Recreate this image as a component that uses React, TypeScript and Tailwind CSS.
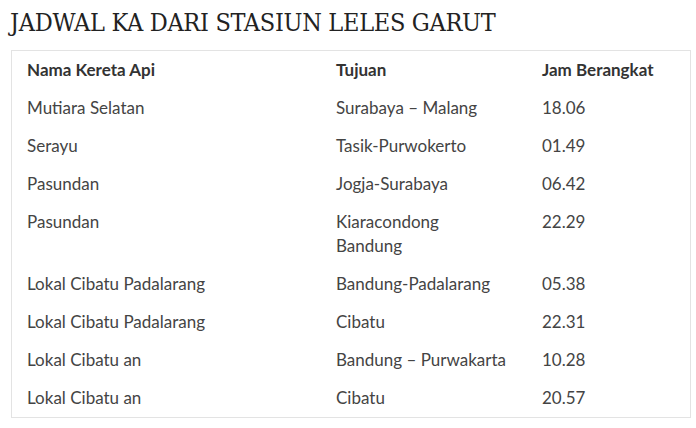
const rows: { name: string; tujuan: string[]; jam: string }[] = [
  { name: "Mutiara Selatan", tujuan: ["Surabaya – Malang"], jam: "18.06" },
  { name: "Serayu", tujuan: ["Tasik-Purwokerto"], jam: "01.49" },
  { name: "Pasundan", tujuan: ["Jogja-Surabaya"], jam: "06.42" },
  { name: "Pasundan", tujuan: ["Kiaracondong", "Bandung"], jam: "22.29" },
  { name: "Lokal Cibatu Padalarang", tujuan: ["Bandung-Padalarang"], jam: "05.38" },
  { name: "Lokal Cibatu Padalarang", tujuan: ["Cibatu"], jam: "22.31" },
  { name: "Lokal Cibatu an", tujuan: ["Bandung – Purwakarta"], jam: "10.28" },
  { name: "Lokal Cibatu an", tujuan: ["Cibatu"], jam: "20.57" },
]

export default function App() {
  return (
    <div className="w-[696px] h-[428px] bg-white overflow-hidden">
      <h1 className="pl-[10px] pt-[9px] text-[25px] leading-[28px] text-[#222] font-['DejaVu_Serif_Condensed','DejaVu_Serif',serif] tracking-[-0.3px]">
        JADWAL KA DARI STASIUN LELES GARUT
      </h1>
      <div className="ml-[11px] mt-[13px] w-[680px] border border-[#e3e3e3] font-['Lato',sans-serif] text-[17px] leading-[24px] text-[#444]">
        <div className="grid grid-cols-[309px_206px_1fr] font-bold text-[#333]">
          <div className="px-[15px] py-[7px]">Nama Kereta Api</div>
          <div className="px-[15px] py-[7px]">Tujuan</div>
          <div className="px-[15px] py-[7px]">Jam Berangkat</div>
        </div>
        {rows.map((r, i) => (
          <div key={i} className="grid grid-cols-[309px_206px_1fr]">
            <div className="px-[15px] py-[7px]">{r.name}</div>
            <div className="px-[15px] py-[7px]">
              {r.tujuan.map((t, j) => (
                <div key={j}>{t}</div>
              ))}
            </div>
            <div className="px-[15px] py-[7px]">{r.jam}</div>
          </div>
        ))}
      </div>
    </div>
  )
}
